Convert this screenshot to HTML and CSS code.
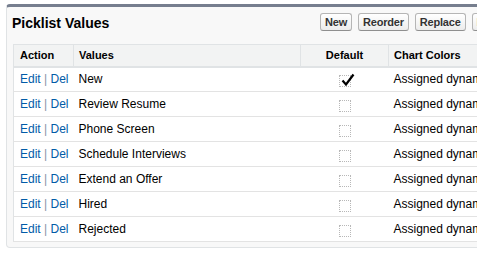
FILE: index.html
```html
<!DOCTYPE html>
<html>
<head>
	<meta charset=utf-8>
	<title>Picklist Values</title>
	<link rel="stylesheet" href="styles.css">
</head>
<body>
<section class=panel>
	<header class=panel-head>
		<h2 class=title>Picklist Values</h2>
		<div class=buttons>
			<button>New</button>
			<button>Reorder</button>
			<button>Replace</button>
			<button>Printable View</button>
		</div>
	</header>
	<table class=list>
		<thead>
			<tr>
				<th class=col-action>Action</th>
				<th class=col-value>Values</th>
				<th class=col-default>Default</th>
				<th class=col-color>Chart Colors</th>
			</tr>
		</thead>
		<tbody>
			<tr>
				<td class=col-action><a href="#">Edit</a> <span class=sep>|</span> <a href="#">Del</a></td>
				<td>New</td>
				<td class=col-default><span class="check on"><svg viewBox="0 0 14 14" width=14 height=14><path d="M1.5 7.5 L5 11.5 L12.5 1.5" fill=none stroke="#000" stroke-width=2.2 /></svg></span></td>
				<td>Assigned dynamically</td>
			</tr>
			<tr>
				<td class=col-action><a href="#">Edit</a> <span class=sep>|</span> <a href="#">Del</a></td>
				<td>Review Resume</td>
				<td class=col-default><span class=check></span></td>
				<td>Assigned dynamically</td>
			</tr>
			<tr>
				<td class=col-action><a href="#">Edit</a> <span class=sep>|</span> <a href="#">Del</a></td>
				<td>Phone Screen</td>
				<td class=col-default><span class=check></span></td>
				<td>Assigned dynamically</td>
			</tr>
			<tr>
				<td class=col-action><a href="#">Edit</a> <span class=sep>|</span> <a href="#">Del</a></td>
				<td>Schedule Interviews</td>
				<td class=col-default><span class=check></span></td>
				<td>Assigned dynamically</td>
			</tr>
			<tr>
				<td class=col-action><a href="#">Edit</a> <span class=sep>|</span> <a href="#">Del</a></td>
				<td>Extend an Offer</td>
				<td class=col-default><span class=check></span></td>
				<td>Assigned dynamically</td>
			</tr>
			<tr>
				<td class=col-action><a href="#">Edit</a> <span class=sep>|</span> <a href="#">Del</a></td>
				<td>Hired</td>
				<td class=col-default><span class=check></span></td>
				<td>Assigned dynamically</td>
			</tr>
			<tr>
				<td class=col-action><a href="#">Edit</a> <span class=sep>|</span> <a href="#">Del</a></td>
				<td>Rejected</td>
				<td class=col-default><span class=check></span></td>
				<td>Assigned dynamically</td>
			</tr>
		</tbody>
	</table>
</section>
</body>
</html>
```

FILE: styles.css
```css
* {
	margin: 0;
	padding: 0;
	box-sizing: border-box;
}
html, body {
	overflow: hidden;
}
body {
	background: #fff;
	font-family: "Liberation Sans", Arial, sans-serif;
	font-size: 12px;
	color: #000;
}
a {
	color: #015ba7;
	text-decoration: none;
}
.panel {
	width: 760px;
	margin: 4px 0 0 6px;
	padding: 0 6px 5px;
	background: #f8f8f8;
	border: 1px solid #e0e3e5;
	border-top: 3px solid #767e8e;
	border-radius: 4px;
}
.panel-head {
	display: flex;
	align-items: center;
	height: 31px;
	margin-bottom: 6px;
}
.title {
	width: 308px;
	flex: none;
	margin-left: -1px;
	font-size: 14px;
	font-weight: bold;
}
.buttons {
	display: flex;
	gap: 6px;
	margin-top: -1px;
	white-space: nowrap;
}
.buttons button {
	height: 18px;
	padding: 0 4px;
	font-family: inherit;
	font-size: 11px;
	font-weight: bold;
	letter-spacing: -0.2px;
	color: #333;
	background: linear-gradient(#fff, #ececec);
	border: 1px solid #b5b5b5;
	border-bottom-color: #8f8f8f;
	border-radius: 3px;
}
.list {
	border-collapse: collapse;
	table-layout: fixed;
	width: 635px;
	background: #fff;
	border-top: 1px solid #e0e3e5;
	border-left: 1px solid #e0e3e5;
}
.list th {
	height: 22px;
	padding: 0 5px;
	text-align: left;
	font-size: 11px;
	font-weight: bold;
	background: #f2f3f3;
	border-right: 1px solid #e0e3e5;
	border-bottom: 2px solid #e0e3e5;
}
.list td {
	height: 25px;
	padding: 0 5px;
	white-space: nowrap;
	border-bottom: 1px solid #e3e3e3;
}
.list .col-action {
	width: 60px;
	padding-left: 6px;
}
.list .col-value {
	width: 227px;
}
.list .col-default {
	width: 88px;
	text-align: center;
}
.list .col-color {
	width: 260px;
}
.sep {
	color: #8694a6;
}
.check {
	display: inline-block;
	position: relative;
	width: 12px;
	height: 12px;
	margin-top: 3px;
	vertical-align: middle;
	border: 1px dotted #b8b8b8;
}
.check svg {
	position: absolute;
	left: 1px;
	top: -3px;
}
```
